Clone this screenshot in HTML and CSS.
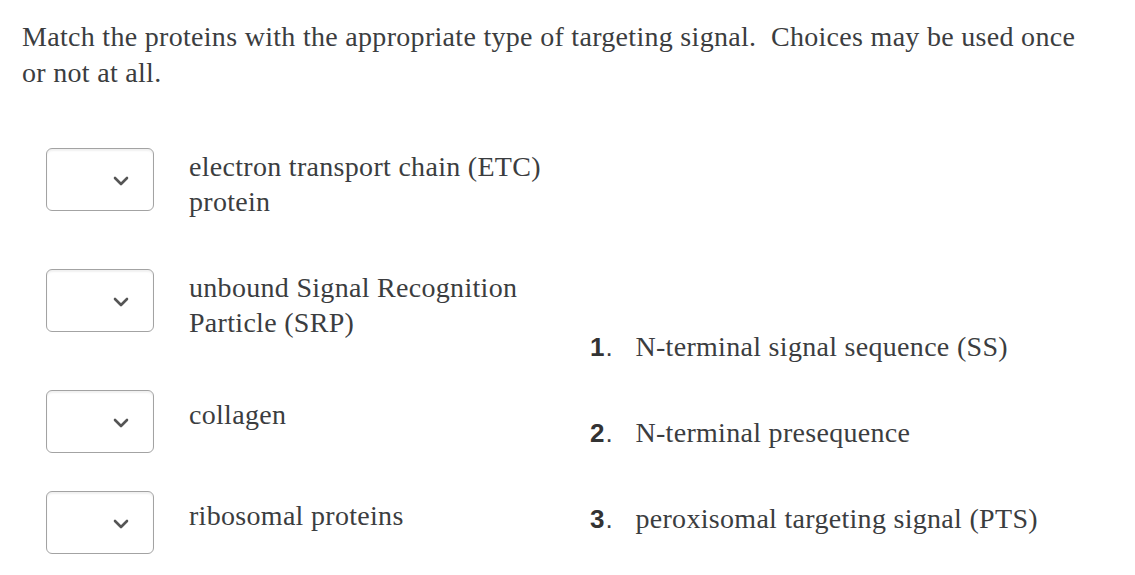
FILE: index.html
```html
<!DOCTYPE html>
<html lang="en">
<head>
  <meta charset="UTF-8">
  <title>Matching question</title>
  <link rel="stylesheet" href="styles.css">
</head>
<body>

  <p class="prompt">Match the proteins with the appropriate type of targeting signal.&nbsp; Choices may be used once or not at all.</p>

  <div class="matching">
    <div class="questions">
      <div class="row">
        <div class="select">
          <svg width="16" height="10" viewBox="0 0 16 10"><path d="M2 2l6 6 6-6" fill="none" stroke="#555" stroke-width="2.6" stroke-linecap="round" stroke-linejoin="round"/></svg>
        </div>
        <div class="label">electron transport chain (ETC)<br>protein</div>
      </div>
      <div class="row">
        <div class="select">
          <svg width="16" height="10" viewBox="0 0 16 10"><path d="M2 2l6 6 6-6" fill="none" stroke="#555" stroke-width="2.6" stroke-linecap="round" stroke-linejoin="round"/></svg>
        </div>
        <div class="label">unbound Signal Recognition<br>Particle (SRP)</div>
      </div>
      <div class="row">
        <div class="select">
          <svg width="16" height="10" viewBox="0 0 16 10"><path d="M2 2l6 6 6-6" fill="none" stroke="#555" stroke-width="2.6" stroke-linecap="round" stroke-linejoin="round"/></svg>
        </div>
        <div class="label single">collagen</div>
      </div>
      <div class="row">
        <div class="select">
          <svg width="16" height="10" viewBox="0 0 16 10"><path d="M2 2l6 6 6-6" fill="none" stroke="#555" stroke-width="2.6" stroke-linecap="round" stroke-linejoin="round"/></svg>
        </div>
        <div class="label single">ribosomal proteins</div>
      </div>
    </div>

    <ol class="answers">
      <li><span class="num">1</span><span class="dot">.</span><span class="text">N-terminal signal sequence (SS)</span></li>
      <li><span class="num">2</span><span class="dot">.</span><span class="text">N-terminal presequence</span></li>
      <li><span class="num">3</span><span class="dot">.</span><span class="text">peroxisomal targeting signal (PTS)</span></li>
    </ol>
  </div>

</body>
</html>
```

FILE: styles.css
```css
body {
  margin: 0;
  padding: 19px 22px;
  background: #fff;
  color: #3b3d40;
  font-family: "Liberation Serif", "Times New Roman", serif;
  font-size: 28px;
  letter-spacing: 0.3px;
}

.prompt {
  margin: 0;
  line-height: 36px;
  max-width: 1080px;
}

.matching {
  display: flex;
  align-items: flex-end;
  margin-top: 57px;
}

.questions {
  width: 544px;
  padding-left: 24px;
}

.row {
  display: flex;
  align-items: flex-start;
  margin-bottom: 38px;
}

.row:last-child {
  margin-bottom: 0;
}

.select {
  width: 108px;
  height: 63px;
  box-sizing: border-box;
  border: 1px solid #a3a3a3;
  border-radius: 6px;
  box-shadow: inset 0 2px 2px rgba(0, 0, 0, 0.06);
  display: flex;
  align-items: center;
  justify-content: flex-end;
  padding-right: 24px;
  padding-top: 2px;
  flex-shrink: 0;
}

.label {
  margin-left: 35px;
  line-height: 35px;
  padding-top: 1px;
  padding-bottom: 12px;
}

.label.single {
  padding-top: 7px;
}

.answers {
  list-style: none;
  margin: 0 0 18px 0;
  padding: 0;
}

.answers li {
  height: 35px;
  line-height: 35px;
  margin-top: 51px;
  display: flex;
  align-items: baseline;
}

.answers li:first-child {
  margin-top: 0;
}

.num {
  font-family: "Liberation Sans", Arial, sans-serif;
  font-weight: bold;
  font-size: 26px;
  letter-spacing: 0;
  color: #333;
}

.dot {
  font-family: "Liberation Sans", Arial, sans-serif;
  font-size: 26px;
  letter-spacing: 0;
  width: 24px;
  padding-left: 1px;
}

.text {
  margin-left: 6px;
}
```
